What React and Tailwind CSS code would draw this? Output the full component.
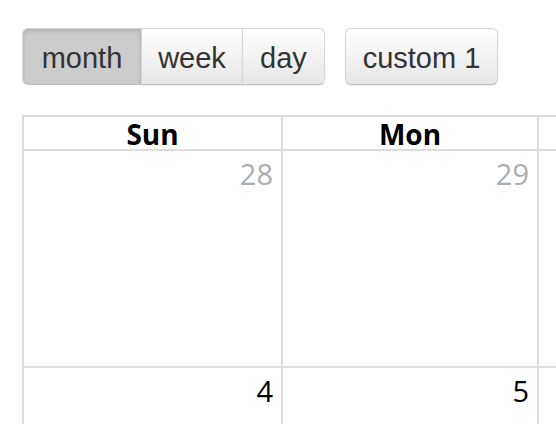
import React from 'react';

// third column is only partly in view, so it carries no text
const days = ['Sun', 'Mon', ''];
const weeks = [
  { h: 'h-[217px]', nums: [28, 29, ''], other: [true, true, true] },
  { h: 'h-[217px]', nums: [4, 5, ''], other: [false, false, false] },
];
const colW = ['w-[259px]', 'w-[256px]', 'w-[256px]'];

const Btn = ({ label, w, active, pos }) => {
  const rounded =
    pos === 'first' ? 'rounded-l-[6px]' : pos === 'last' ? 'rounded-r-[6px]' : pos === 'single' ? 'rounded-[6px]' : '';
  const look = active
    ? 'bg-[#cccccc] shadow-[inset_0_2px_4px_rgba(0,0,0,0.15)]'
    : 'bg-gradient-to-b from-white to-[#e6e6e6] shadow-[0_1px_2px_rgba(0,0,0,0.08)]';
  return (
    <button
      className={`${w} h-[57px] ${rounded} ${look} border border-[#d6d6d6] border-b-[#bfbfbf] -ml-px first:ml-0 pt-[4px] text-[29px] text-[#333] leading-none flex items-center justify-center`}
      style={{ fontFamily: '"Helvetica Neue", "Liberation Sans", Arial, sans-serif' }}
    >
      {label}
    </button>
  );
};

export default function App() {
  return (
    <div className="w-[556px] h-[424px] overflow-hidden bg-white">
      {/* toolbar */}
      <div className="flex items-start pl-[22px] pt-[28px] gap-[21px]">
        <div className="flex">
          <Btn label="month" w="w-[120px]" active pos="first" />
          <Btn label="week" w="w-[102px]" />
          <Btn label="day" w="w-[83px]" pos="last" />
        </div>
        <Btn label="custom 1" w="w-[153px]" pos="single" />
      </div>

      {/* month grid */}
      <div
        className="ml-[22px] mt-[30px] w-[800px] text-black"
        style={{ fontFamily: '"Open Sans", "Noto Sans", sans-serif' }}
      >
        <div className="flex">
          {days.map((d, i) => (
            <div
              key={i}
              className={`${colW[i]} h-[34px] border-l-2 border-t-2 border-[#dddddd] flex items-center justify-center pt-[2px] text-[28px] font-bold leading-none`}
            >
              {d}
            </div>
          ))}
        </div>
        {weeks.map((wk, r) => (
          <div key={r} className="flex">
            {wk.nums.map((n, i) => (
              <div
                key={i}
                className={`${colW[i]} ${wk.h} border-l-2 border-t-2 border-[#dddddd] text-right pr-[8px] pt-[8px] text-[29px] leading-none ${
                  wk.other[i] ? 'text-[#adadad]' : 'text-black'
                }`}
              >
                {n}
              </div>
            ))}
          </div>
        ))}
      </div>
    </div>
  );
}
